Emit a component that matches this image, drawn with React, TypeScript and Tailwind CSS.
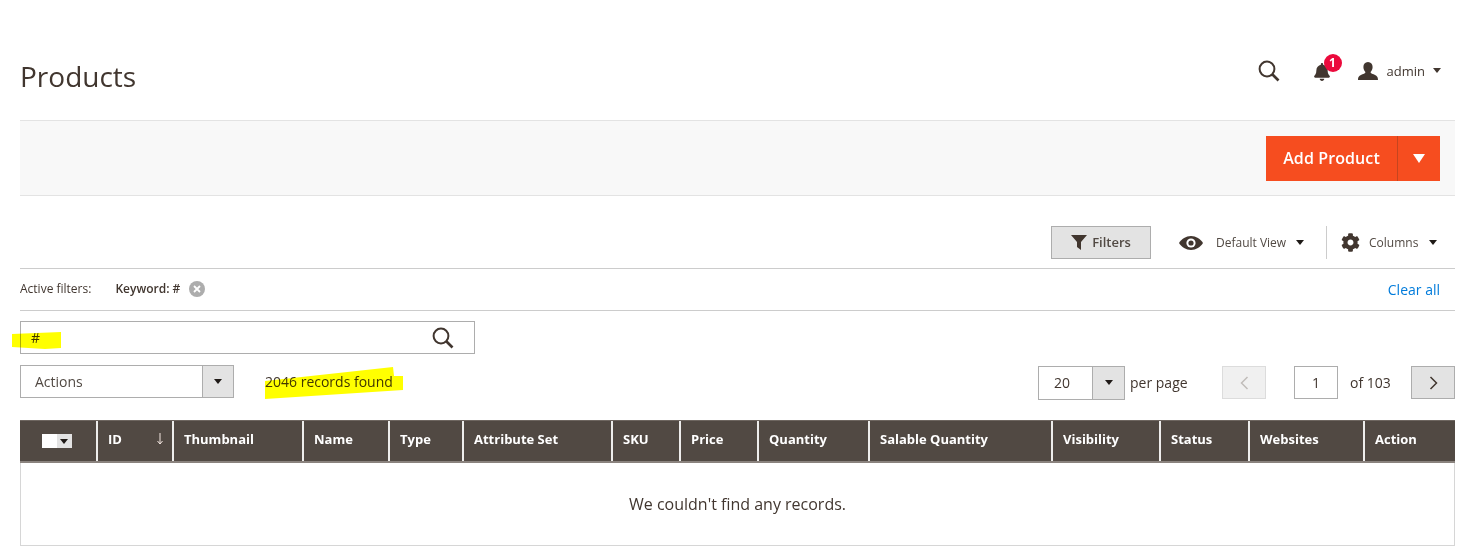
import { FaBell, FaCog } from "react-icons/fa";

const columns = [
  { label: "ID", width: "w-[76px]" },
  { label: "Thumbnail", width: "w-[130px]" },
  { label: "Name", width: "w-[86px]" },
  { label: "Type", width: "w-[74px]" },
  { label: "Attribute Set", width: "w-[149px]" },
  { label: "SKU", width: "w-[68px]" },
  { label: "Price", width: "w-[78px]" },
  { label: "Quantity", width: "w-[111px]" },
  { label: "Salable Quantity", width: "w-[183px]" },
  { label: "Visibility", width: "w-[108px]" },
  { label: "Status", width: "w-[89px]" },
  { label: "Websites", width: "w-[115px]" },
  { label: "Action", width: "w-[92px]" },
];

function Caret({ className = "" }: { className?: string }) {
  return (
    <svg width="8" height="5" viewBox="0 0 8 5" className={className}>
      <polygon points="0,0 8,0 4,5" fill="currentColor" />
    </svg>
  );
}

function SearchIcon({ size = 22 }: { size?: number }) {
  return (
    <svg width={size} height={size} viewBox="0 0 22 22" fill="none" stroke="#41362f">
      <circle cx="9" cy="9" r="7.4" strokeWidth="2" />
      <path d="M14.5 14.5 L20.5 20.5" strokeWidth="2.6" />
    </svg>
  );
}

export default function App() {
  return (
    <div className="relative w-[1459px] h-[560px] overflow-hidden bg-white pl-[20px] pr-[4px] text-[#41362f] font-['Open_Sans',sans-serif]">
      {/* Page header */}
      <header className="h-[120px] pt-[57px] flex items-start justify-between">
        <h1 className="text-[28px] leading-[38px] font-normal text-[#41362f]">Products</h1>
        <div className="flex items-center pr-[14px] pt-[3px] h-[24px]">
          <SearchIcon />
          <div className="relative ml-[33px] w-[30px] h-[24px]">
            <FaBell size={18} className="absolute left-0 top-[4px] text-[#41362f]" />
            <span className="absolute left-[11px] top-[-5px] w-[18px] h-[18px] rounded-full bg-[#eb0a3c] text-white text-[12px] leading-[18px] font-bold text-center">
              1
            </span>
          </div>
          <svg width="20" height="18" viewBox="0 0 20 18" className="ml-[15px]">
            <path
              d="M10 0c3 0 4.600 2.200 4.600 5 0 2-.8 3.700-2 5 .1 1 .6 1.400 2 2 2.700 1 5.400 1.500 5.400 6H0c0-4.500 2.700-5 5.400-6 1.400-.6 1.900-1 2-2-1.200-1.300-2-3-2-5C5.400 2.200 7 0 10 0z"
              fill="#41362f"
            />
          </svg>
          <span className="ml-[9px] text-[13px] leading-[18px] text-[#41362f]">admin</span>
          <Caret className="ml-[8px] text-[#41362f]" />
        </div>
      </header>

      {/* Action bar */}
      <div className="h-[76px] bg-[#f8f8f8] border-y border-[#e3e3e3] flex items-center justify-end pr-[15px]">
        <div className="flex h-[45px] bg-[#f64d1f] text-white">
          <div className="w-[132px] border-r border-[#c5451f] flex items-center justify-center text-[16px] font-semibold tracking-[0.1px]">
            Add Product
          </div>
          <div className="w-[42px] flex items-center justify-center">
            <svg width="12" height="9" viewBox="0 0 12 9">
              <polygon points="0,0 12,0 6,9" fill="#fff" />
            </svg>
          </div>
        </div>
      </div>

      {/* Grid toolbar */}
      <div className="h-[73px] border-b border-[#cccccc] flex items-start justify-end pt-[30px]">
        <button className="w-[100px] h-[33px] mr-[28px] bg-[#e3e3e3] border border-[#adadad] flex items-center justify-center text-[13px] font-semibold text-[#514943]">
          <svg width="16" height="15" viewBox="0 0 16 15" className="mr-[5px]">
            <polygon points="0,0 16,0 10,7 10,15 6,12 6,7" fill="#41362f" />
          </svg>
          Filters
        </button>
        <div className="flex items-center h-[33px] w-[147px]">
          <svg width="24" height="14" viewBox="0 0 24 14">
            <path
              d="M12 0c5 0 9.500 3 12 7-2.500 4-7 7-12 7S2.500 11 0 7c2.500-4 7-7 12-7z"
              fill="#41362f"
            />
            <circle cx="12" cy="7" r="4.600" fill="#fff" />
            <circle cx="12" cy="7" r="2.600" fill="#41362f" />
          </svg>
          <span className="ml-[13px] text-[12px] text-[#514943]">Default View</span>
          <Caret className="ml-[10px] text-[#1f1a17]" />
        </div>
        <div className="flex items-center h-[33px] border-l border-[#cccccc] pl-[14px] w-[129px]">
          <FaCog size={19} className="text-[#41362f]" />
          <span className="ml-[9px] text-[12px] text-[#514943]">Columns</span>
          <Caret className="ml-[11px] text-[#1f1a17]" />
        </div>
      </div>

      {/* Active filters */}
      <div className="h-[42px] border-b border-[#cccccc] flex items-center justify-between pr-[15px]">
        <div className="flex items-center pb-[2px]">
          <span className="text-[12px] text-[#41362f]">Active filters:</span>
          <span className="ml-[24px] text-[12px] font-semibold text-[#41362f]">Keyword: #</span>
          <span className="ml-[9px] w-[16px] h-[16px] rounded-full bg-[#adadad] flex items-center justify-center">
            <svg width="8" height="8" viewBox="0 0 8 8" stroke="#fff" strokeWidth="1.800">
              <path d="M1 1 L7 7 M7 1 L1 7" />
            </svg>
          </span>
        </div>
        <a className="text-[14px] text-[#007bdb]">Clear all</a>
      </div>

      {/* Keyword search */}
      <div className="mt-[10px] w-[455px] h-[33px] border border-[#adadad] flex items-center justify-between pl-[10px] pr-[20px]">
        <span className="text-[14px] text-[#41362f]">#</span>
        <SearchIcon />
      </div>

      {/* Mass actions and pager */}
      <div className="mt-[11px] h-[35px] flex items-start pr-[0px]">
        <div className="w-[214px] h-[33px] border border-[#adadad] flex">
          <span className="flex-1 pl-[14px] text-[14px] leading-[31px] text-[#514943]">Actions</span>
          <span className="w-[31px] border-l border-[#adadad] bg-[#e3e3e3] flex items-center justify-center text-[#1f1a17]">
            <Caret />
          </span>
        </div>
        <span className="ml-[31px] text-[14px] leading-[33px] text-[#41362f]">2046 records found</span>
        <div className="ml-auto flex items-center h-[35px]">
          <div className="w-[87px] h-[34px] border border-[#adadad] flex">
            <span className="flex-1 pl-[15px] text-[14px] leading-[32px] text-[#41362f]">20</span>
            <span className="w-[32px] border-l border-[#adadad] bg-[#e3e3e3] flex items-center justify-center text-[#1f1a17]">
              <Caret />
            </span>
          </div>
          <span className="ml-[5px] w-[92px] text-[14px] text-[#41362f]">per page</span>
          <span className="w-[44px] h-[33px] bg-[#f0f0f0] border border-[#dcdcdc] flex items-center justify-center">
            <svg width="9" height="14" viewBox="0 0 9 14" fill="none" stroke="#c0bcb9" strokeWidth="1.500">
              <path d="M7.500 1 L1.500 7 L7.500 13" />
            </svg>
          </span>
          <span className="ml-[28px] w-[44px] h-[33px] border border-[#adadad] text-center text-[14px] leading-[31px] text-[#41362f]">
            1
          </span>
          <span className="ml-[12px] w-[61px] text-[14px] text-[#41362f]">of 103</span>
          <span className="w-[44px] h-[33px] bg-[#e3e3e3] border border-[#adadad] flex items-center justify-center">
            <svg width="9" height="14" viewBox="0 0 9 14" fill="none" stroke="#41362f" strokeWidth="1.500">
              <path d="M1.500 1 L7.500 7 L1.500 13" />
            </svg>
          </span>
        </div>
      </div>

      {/* Products table */}
      <div className="mt-[20px] w-[1435px] border-x border-b border-[#d6d6d6]">
        <div className="flex h-[43px] -mx-px bg-[#514943] border-t border-[#6e6660] border-b-2 border-b-[#8a837e]">
          <div className="w-[77px] flex items-center justify-center pr-[3px]">
            <span className="w-[15px] h-[14px] bg-white" />
            <span className="w-[15px] h-[14px] bg-[#e3e3e3] flex items-center justify-center text-[#1f1a17]">
              <Caret />
            </span>
          </div>
          {columns.map((col) => (
            <div
              key={col.label}
              className={`${col.width} relative shrink-0 border-l-2 border-white/90 pl-[10px] text-[13px] font-bold leading-[37px] text-white`}
            >
              {col.label}
              {col.label === "ID" && (
                <svg width="6" height="12" viewBox="0 0 6 12" className="absolute right-[9px] top-[12px]" fill="none" stroke="#f3e6e0">
                  <path d="M3 0 V11 M0.500 8 L3 11 L5.500 8" />
                </svg>
              )}
            </div>
          ))}
        </div>
        <div className="h-[82px] flex items-center justify-center text-[16px] text-[#41362f]">
          We couldn't find any records.
        </div>
      </div>

      {/* Yellow marker strokes added over the screenshot */}
      <svg width="1459" height="560" className="absolute left-0 top-0 pointer-events-none mix-blend-multiply">
        <polygon points="12,334 61,332 61,348 45,349 12,347" fill="#ffff00" />
        <polygon points="265,381 393,367 394,376 403,376 403,390 265,399" fill="#ffff00" />
      </svg>
    </div>
  );
}
